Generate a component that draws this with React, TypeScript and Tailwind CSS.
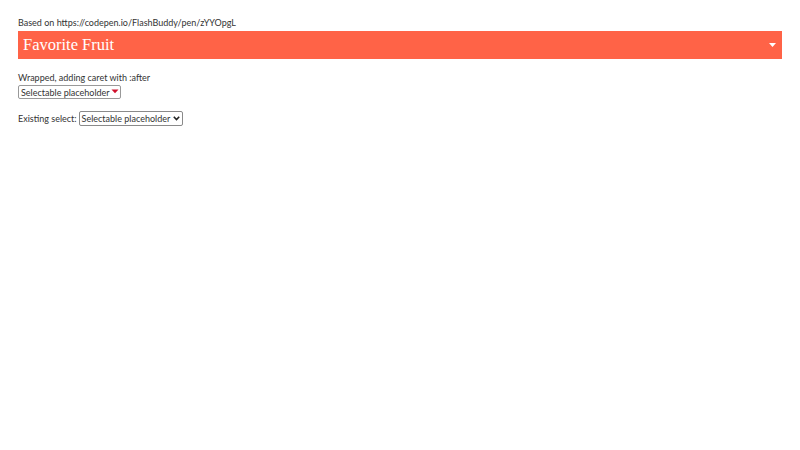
export default function App() {
  return (
    <div className="min-h-[450px] w-[800px] bg-white px-[18px] pt-[17px] text-[#333] [font-family:Lato,'Liberation_Sans',sans-serif]">
      <div className="whitespace-nowrap text-[9px] leading-[12px] text-[#333]">Based on https://codepen.io/FlashBuddy/pen/zYYOpgL</div>
      <div className="mt-[2px] flex h-[28px] items-center justify-between bg-[#ff6347] pl-[5px] pr-[5px]">
        <span className="text-[16.5px] text-white [font-family:'Liberation_Serif',serif]">Favorite Fruit</span>
        <svg width="7" height="4" viewBox="0 0 7 4" className="mr-[1px]"><path d="M0 0h7L3.5 4z" fill="#fff" /></svg>
      </div>
      <div className="mt-[13px] whitespace-nowrap text-[9px] leading-[12px]">Wrapped, adding caret with :after</div>
      <div className="relative mt-[1px] flex h-[14px] w-[103px] items-center rounded-[2px] border border-[#999] bg-white pl-[2px] text-[9px] leading-none">
        <span className="whitespace-nowrap">Selectable placeholder</span>
        <svg width="8" height="5" viewBox="0 0 8 5" className="absolute right-[1px] top-[3px]">
          <path d="M0.5 0.5h7L4 4.2z" fill="#d0102c" />
        </svg>
      </div>
      <div className="mt-[12px] flex items-center gap-[2px] whitespace-nowrap text-[9px] leading-[12px]">
        <span>Existing select:</span>
        <div className="flex h-[15px] w-[104px] items-center justify-between rounded-[2px] border border-[#8a8a8a] bg-white pl-[2px] pr-[2px] leading-none">
          <span>Selectable placeholder</span>
          <svg width="7" height="5" viewBox="0 0 7 5"><path d="M0.8 0.8L3.5 3.6L6.2 0.8" fill="none" stroke="#222" strokeWidth="1.6" /></svg>
        </div>
      </div>
    </div>
  );
}
